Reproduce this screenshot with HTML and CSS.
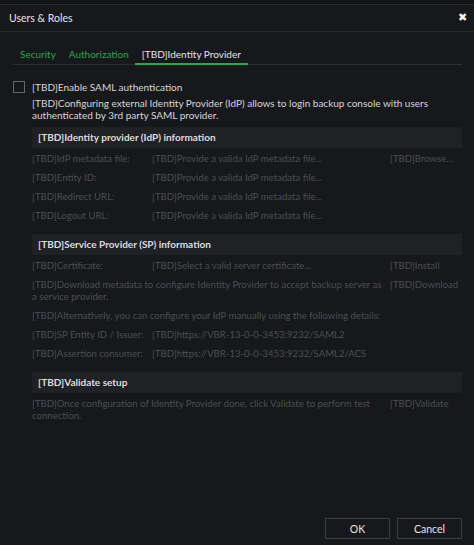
FILE: index.html
```html
<!DOCTYPE html>
<html lang="en">
<head>
  <meta charset="UTF-8">
  <title>Users &amp; Roles</title>
  <link rel="stylesheet" href="styles.css">
</head>
<body>
  <div class="dialog">
    <div class="titlebar">
      <span class="title">Users &amp; Roles</span>
      <span class="close">&#x2716;</span>
    </div>

    <div class="content">
      <div class="tabs">
        <span class="tab">Security</span>
        <span class="tab">Authorization</span>
        <span class="tab active">[TBD]Identity Provider</span>
      </div>

      <label class="check">
        <span class="box"></span>
        [TBD]Enable SAML authentication
      </label>

      <div class="body">
        <p class="intro">[TBD]Configuring external Identity Provider (IdP) allows to login backup console with users authenticated by 3rd party SAML provider.</p>

        <div class="section-head">[TBD]Identity provider (IdP) information</div>
        <div class="rows">
          <span>[TBD]IdP metadata file:</span><span>[TBD]Provide a valida IdP metadata file...</span><span>[TBD]Browse...</span>
          <span>[TBD]Entity ID:</span><span>[TBD]Provide a valida IdP metadata file...</span><span></span>
          <span>[TBD]Redirect URL:</span><span>[TBD]Provide a valida IdP metadata file...</span><span></span>
          <span>[TBD]Logout URL:</span><span>[TBD]Provide a valida IdP metadata file...</span><span></span>
        </div>

        <div class="section-head">[TBD]Service Provider (SP) information</div>
        <div class="rows">
          <span>[TBD]Certificate:</span><span>[TBD]Select a valid server certificate...</span><span>[TBD]Install</span>
          <span class="wide">[TBD]Download metadata to configure Identity Provider to accept backup server as a service provider.</span><span>[TBD]Download</span>
          <span class="full">[TBD]Alternatively, you can configure your IdP manually using the following details:</span>
          <span>[TBD]SP Entity ID / Issuer:</span><span class="span2">[TBD]https://VBR-13-0-0-3453:9232/SAML2</span>
          <span>[TBD]Assertion consumer:</span><span class="span2">[TBD]https://VBR-13-0-0-3453:9232/SAML2/ACS</span>
        </div>

        <div class="section-head">[TBD]Validate setup</div>
        <div class="rows">
          <span class="wide">[TBD]Once configuration of Identity Provider done, click Validate to perform test connection.</span><span>[TBD]Validate</span>
        </div>
      </div>
    </div>

    <div class="footer">
      <button class="btn">OK</button>
      <button class="btn">Cancel</button>
    </div>
  </div>
</body>
</html>
```

FILE: styles.css
```css
* {
  box-sizing: border-box;
}

body {
  margin: 0;
  background: #121417;
  font-family: Lato, 'Noto Sans', sans-serif;
  font-size: 10px;
  color: #d6d7d9;
}

.dialog {
  margin-top: 4px;
  height: 541px;
  border-top: 1px solid #2a2c30;
  background: #16181c;
  display: flex;
  flex-direction: column;
}

.titlebar {
  height: 27px;
  padding: 0 9px;
  border-bottom: 1px solid #2a2c30;
  display: flex;
  align-items: center;
  justify-content: space-between;
}

.title {
  font-size: 10.5px;
  color: #e4e5e7;
}

.close {
  font-size: 11px;
  color: #f2f2f2;
  margin-right: -2px;
  margin-top: -2px;
}

.content {
  padding: 0 12px 0 13px;
}

.tabs {
  margin-top: 16px;
  border-bottom: 1px solid #2c2e32;
  display: flex;
  padding-left: 7px;
}

.tab {
  color: #27a84a;
  padding: 0 0 4px;
  margin-right: 13px;
  font-size: 10px;
}

.tab.active {
  color: #e4e5e7;
  border-bottom: 2px solid #27a84a;
  margin-bottom: -1px;
  padding: 0 7px 3px;
  margin-left: -7px;
}

.check {
  display: flex;
  align-items: center;
  gap: 7px;
  margin-top: 16px;
  font-size: 10px;
}

.box {
  width: 12px;
  height: 12px;
  border: 1px solid #63666b;
  display: inline-block;
}

.body {
  padding-left: 19px;
}

.intro {
  margin: 4px 0 6px;
  line-height: 12px;
}

.section-head {
  background: #1f2125;
  height: 21px;
  line-height: 21px;
  padding-left: 6px;
  font-weight: 700;
  font-size: 10px;
  color: #dcdde0;
}

.rows {
  display: grid;
  grid-template-columns: 120px 238px 72px;
  row-gap: 7px;
  color: #4b4e54;
  font-size: 9.6px;
  margin: 5px 0 12px;
  line-height: 12px;
}

.rows .wide {
  grid-column: span 2;
  padding-right: 8px;
}

.rows .full {
  grid-column: span 3;
}

.rows .span2 {
  grid-column: span 2;
}

.footer {
  margin-top: auto;
  display: flex;
  justify-content: flex-end;
  gap: 7px;
  padding: 0 12px 6px;
}

.btn {
  width: 65px;
  height: 21px;
  background: #16181c;
  border: 1px solid #3b3d42;
  color: #e4e5e7;
  font-family: inherit;
  font-size: 10.5px;
}
```
